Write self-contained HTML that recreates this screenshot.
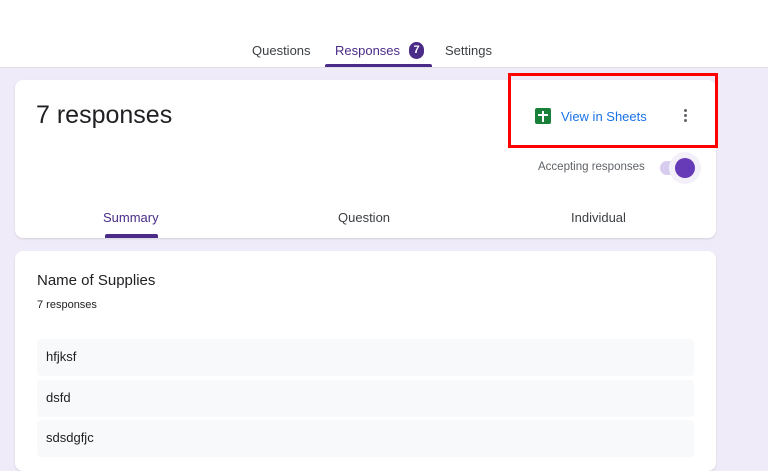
<!DOCTYPE html>
<html><head><style>
*{margin:0;padding:0;box-sizing:border-box}
body{width:768px;height:457px;overflow:hidden;background:#f0ebf8;font-family:"Liberation Sans",sans-serif;position:relative;color:#202124}
.hdr{position:absolute;left:0;top:0;width:768px;height:68px;background:#fff;border-bottom:1px solid #e0dde6}
.tab{position:absolute;top:43px;font-size:13px;color:#3c4043}
.card{position:absolute;left:15px;width:701px;background:#fff;border-radius:8px;box-shadow:0 1px 2px rgba(0,0,0,.12)}
.row{position:absolute;left:22px;width:657px;height:37px;background:#f8f9fa;border-radius:4px;font-size:13px;padding:10px 9px;color:#202124}
</style></head><body>
<div class="hdr">
<div class="tab" style="left:252px">Questions</div>
<div class="tab" style="left:335px;color:#4a2c88">Responses</div>
<div style="position:absolute;left:409px;top:42px;width:15px;height:17px;border-radius:8px;background:#4a2c88;color:#fff;font-size:11px;font-weight:bold;text-align:center;line-height:17px">7</div>
<div class="tab" style="left:445px">Settings</div>
<div style="position:absolute;left:325px;top:64px;width:107px;height:3px;background:#4a2c88;border-radius:2px 2px 0 0"></div>
</div>
<div class="card" style="top:80px;height:158px">
<div style="position:absolute;left:21px;top:21px;font-size:25px;color:#202124">7 responses</div>
<div style="position:absolute;left:520px;top:28px;width:16px;height:16px;background:#188038;border-radius:2px"><div style="position:absolute;left:7px;top:3px;width:2px;height:11px;background:#fff"></div><div style="position:absolute;left:3px;top:6px;width:10px;height:2px;background:#fff"></div></div>
<div style="position:absolute;left:546px;top:29px;font-size:13px;color:#1a73e8">View in Sheets</div>
<div style="position:absolute;left:669px;top:29px;width:4px"><div style="width:3px;height:3px;border-radius:50%;background:#5f6368;margin-bottom:2px"></div><div style="width:3px;height:3px;border-radius:50%;background:#5f6368;margin-bottom:2px"></div><div style="width:3px;height:3px;border-radius:50%;background:#5f6368"></div></div>
<div style="position:absolute;left:523px;top:81px;font-size:11.5px;color:#5f6368">Accepting responses</div>
<div style="position:absolute;left:645px;top:81px;width:34px;height:14px;border-radius:7px;background:#d8cdee"></div>
<div style="position:absolute;left:660px;top:78px;width:20px;height:20px;border-radius:50%;background:#673ab7;box-shadow:0 0 0 6px #f3f0fa"></div>
<div style="position:absolute;left:88px;top:130px;font-size:13px;color:#4a2c88">Summary</div>
<div style="position:absolute;left:90px;top:154px;width:53px;height:4px;background:#4a2c88;border-radius:2px 2px 0 0"></div>
<div style="position:absolute;left:323px;top:130px;font-size:13px;color:#3c4043">Question</div>
<div style="position:absolute;left:556px;top:130px;font-size:13px;color:#3c4043">Individual</div>
</div>
<div class="card" style="top:251px;height:220px">
<div style="position:absolute;left:22px;top:21px;font-size:15px;color:#202124">Name of Supplies</div>
<div style="position:absolute;left:22px;top:48px;font-size:11px;color:#202124">7 responses</div>
<div class="row" style="top:88px">hfjksf</div>
<div class="row" style="top:129px">dsfd</div>
<div class="row" style="top:169px">sdsdgfjc</div>
</div>
<div style="position:absolute;left:508px;top:73px;width:210px;height:75px;border:3px solid #f00"></div>
</body></html>
